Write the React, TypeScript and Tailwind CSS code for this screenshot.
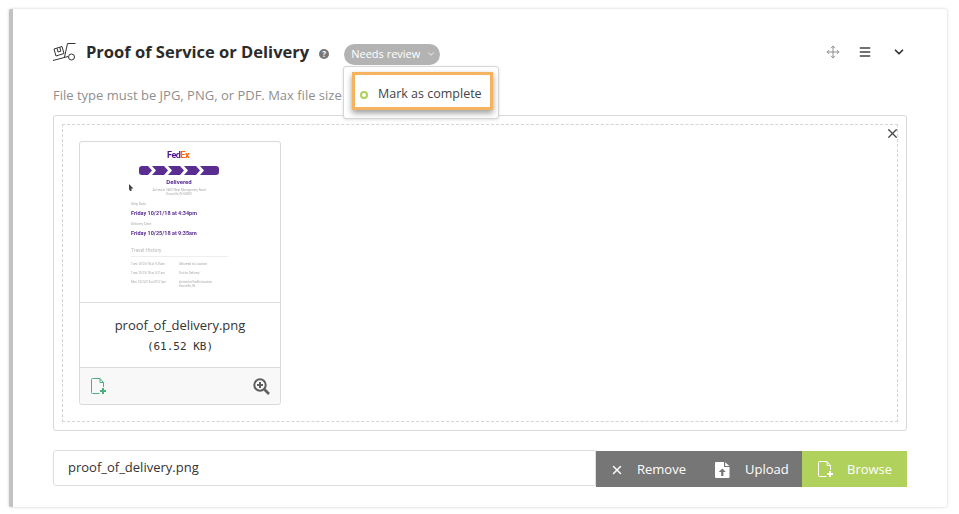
import React from 'react';
import { ChevronDown, Menu, Move, X } from 'lucide-react';

const font = "font-['Open_Sans',sans-serif]";

const DollyIcon = () => (
  <svg width="23" height="20" viewBox="0 0 23 20" fill="none" stroke="#333" strokeWidth="1">
    <path d="M0 18.5 L15 14.5" />
    <path d="M11.5 15 L14.5 1.5 L22.5 1.5" />
    <circle cx="18.5" cy="15" r="3" />
    <path d="M1 7 L9 4.5 L11 11.5 L3 14 Z" />
    <path d="M4 6.2 L5 10 L7.8 9.2 L6.8 5.4" />
  </svg>
);

const FileAddIcon = ({ color }: { color: string }) => (
  <svg width="16" height="17" viewBox="0 0 16 17" fill="none" stroke={color} strokeWidth="1">
    <path d="M8.5 15.5 H1.5 a1 1 0 0 1 -1 -1 V1.5 a1 1 0 0 1 1 -1 H9 L12.5 4.5 V9" />
    <path d="M9 0.5 V4.5 H12.5" />
    <path d="M12 10 V16 M9 13 H15" strokeWidth="2" />
  </svg>
);

const UploadIcon = () => (
  <svg width="15" height="16" viewBox="0 0 15 16">
    <path
      fill="#fff"
      fillRule="evenodd"
      d="M1 0 H9 V5 H14.5 V15 a1 1 0 0 1 -1 1 H1 a1 1 0 0 1 -1 -1 V1 a1 1 0 0 1 1 -1 Z M10.2 0.2 L14.3 4 H10.2 Z M7.3 6.5 L3.8 10 H6.2 V14 H8.4 V10 H10.8 Z"
    />
  </svg>
);

const ZoomIcon = () => (
  <svg width="17" height="17" viewBox="0 0 17 17" fill="none" stroke="#5f5f5f">
    <circle cx="7" cy="7" r="5.7" strokeWidth="2" />
    <path d="M11.5 11.5 L16 16" strokeWidth="2.6" />
    <path d="M7 4 V10 M4 7 H10" strokeWidth="2" />
  </svg>
);

const ProgressArrows = () => (
  <svg width="80" height="9" viewBox="0 0 80 9" fill="#5a2d91">
    <path d="M3 0 H9 L13 4.5 L9 9 H3 Q0 9 0 6 V3 Q0 0 3 0 Z" />
    <path d="M13 0 H25 L29 4.5 L25 9 H13 L17 4.5 Z" />
    <path d="M29 0 H41 L45 4.5 L41 9 H29 L33 4.5 Z" />
    <path d="M45 0 H57 L61 4.5 L57 9 H45 L49 4.5 Z" />
    <path d="M61 0 H77 Q80 0 80 3 V6 Q80 9 77 9 H61 L65 4.5 Z" />
  </svg>
);

// tiny FedEx receipt inside the file thumbnail
const Thumbnail = () => (
  <div className="h-[160px] pt-[8px] pl-[51px] flex flex-col font-['Roboto',sans-serif] blur-[0.5px] relative">
    <div className="w-[80px] ml-[8px] text-center text-[9px] leading-[11px] font-bold tracking-[-0.5px] -translate-x-[1px]">
      <span className="text-[#4d148c]">Fed</span>
      <span className="text-[#ff6200]">Ex</span>
    </div>
    <div className="mt-[5px] ml-[8px] w-[80px] h-[9px]">
      <ProgressArrows />
    </div>
    <div className="mt-[3px] ml-[8px] w-[80px] text-center text-[6px] leading-[8px] font-bold text-[#5a2d91]">Delivered</div>
    <div className="mt-[2px] ml-[8px] w-[80px] text-center text-[3px] leading-[4px] text-[#aaa]">
      Arrived at 3400 West Montgomery Road
      <br />
      Knoxville, IN 68000
    </div>
    <div className="mt-[6px] text-[3.5px] leading-[5px] text-[#aaa]">Ship Date</div>
    <div className="mt-[2px] text-[5.5px] leading-[8px] font-bold text-[#5a2d91]">Friday 10/21/18 at 4:34pm</div>
    <div className="mt-[5px] text-[3.5px] leading-[5px] text-[#aaa]">Delivery Date</div>
    <div className="mt-[2px] text-[5.5px] leading-[8px] font-bold text-[#5a2d91]">Friday 10/25/18 at 9:35am</div>
    <div className="mt-[10px] w-[97px] border-b border-[#eee] pb-[2px] text-[5px] leading-[7px] text-[#bbb]">Travel History</div>
    <div className="mt-[5px] grid grid-cols-[48px_1fr] w-[97px] text-[3px] leading-[4px] text-[#aaa] gap-y-[5px]">
      <span>Tues 10/25/18 at 9:35am</span>
      <span>Delivered to Location</span>
      <span>Tues 10/25/18 at 5:21am</span>
      <span>Out for Delivery</span>
      <span>Mon 10/24/18 at 09:21pm</span>
      <span>
        Arrived at FedEx location
        <br />
        Knoxville, IN
      </span>
    </div>
    <svg className="absolute left-[49px] top-[42px]" width="5" height="7" viewBox="0 0 5 7">
      <path d="M0 0 L4.5 4.5 L2.5 4.5 L2.5 7 L1 7 L0 5 Z" fill="#444" />
    </svg>
  </div>
);

const App: React.FC = () => {
  return (
    <div className={`w-[959px] h-[514px] bg-white overflow-hidden pt-[9px] pl-[9px] ${font}`}>
      {/* Card */}
      <div className="relative w-[938px] h-[498px] bg-white border-l-[4px] border-[#c2c2c2] rounded-[2px] shadow-[0_0_3px_rgba(0,0,0,0.2)] pt-[29px] px-[40px]">
        {/* Header */}
        <div className="flex items-center h-[27px]">
          <div className="w-[23px] h-[20px] mr-[10px]">
            <DollyIcon />
          </div>
          <h2 className="text-[16.5px] leading-[27px] font-bold text-[#2b2b2b]">Proof of Service or Delivery</h2>
          <div className="ml-[10px] mt-[4px] w-[10px] h-[10px] rounded-full bg-[#777] flex items-center justify-center text-white text-[8px] leading-none font-bold">?</div>
          <div className="ml-[15px] mt-[5px] w-[96px] h-[21px] rounded-full bg-[#b3b3b3] flex items-center pl-[7px] text-white text-[11px]">
            <span>Needs review</span>
            <ChevronDown className="ml-[6px] w-[10px] h-[10px]" strokeWidth={2} />
          </div>
          <div className="ml-auto flex items-center text-[#333]">
            <Move className="w-[14px] h-[14px] text-[#888] mr-[18px] ml-[1px]" strokeWidth={1.6} />
            <Menu className="w-[14px] h-[14px] text-[#444]" strokeWidth={2.6} />
            <ChevronDown className="w-[14px] h-[14px] ml-[20px] mr-[1px] text-[#333]" strokeWidth={3} />
          </div>
        </div>

        {/* Status menu */}
        <div className="absolute left-[330px] top-[57px] w-[156px] h-[53px] bg-white border border-[#d6d6d6] rounded-[3px] shadow-[0_1px_3px_rgba(0,0,0,0.12)] z-10 pt-[5px] pl-[8px]">
          <div className="w-[141px] h-[38px] border-[3px] border-[#f5b35f] shadow-[0_3px_6px_rgba(0,0,0,0.4)] flex items-center pl-[5px] pt-[7px] text-[12.5px] text-[#444]">
            <span className="w-[8px] h-[8px] rounded-full border-[2px] border-[#aed15c] mr-[10px]" />
            Mark as complete
          </div>
        </div>

        <p className="mt-[20px] text-[13px] leading-[21px] text-[#8f8f8f]">File type must be JPG, PNG, or PDF. Max file size</p>

        {/* Drop area */}
        <div className="relative mt-[9px] h-[316px] border border-[#d9d9d9] rounded-[3px] p-[8px]">
          <div className="h-[298px] border border-dashed border-[#d4d4d4] pl-[16px] pt-[16px]">
            <div className="w-[202px] h-[264px] border border-[#d9d9d9] rounded-[3px] flex flex-col">
              <Thumbnail />
              <div className="h-[65px] border-t border-[#dcdcdc] flex flex-col items-center pt-[12px] text-[#333]">
                <span className="text-[13px] leading-[20px]">proof_of_delivery.png</span>
                <span className="font-['DejaVu_Sans_Mono',monospace] text-[11px] leading-[20px] mt-[2px]">(61.52 KB)</span>
              </div>
              <div className="flex-1 border-t border-[#dcdcdc] bg-[#f8f8f8] flex items-center justify-between pl-[11px] pr-[10px] rounded-b-[3px]">
                <FileAddIcon color="#4cb07c" />
                <ZoomIcon />
              </div>
            </div>
          </div>
          <X className="absolute right-[6px] top-[10px] w-[15px] h-[15px] text-[#444]" strokeWidth={2} />
        </div>

        {/* File input row */}
        <div className="mt-[19px] flex h-[37px] items-end">
          <div className="flex-1 h-[36px] self-start border border-[#dedede] rounded-l-[3px] flex items-center pl-[14px] text-[13px] text-[#333]">proof_of_delivery.png</div>
          <div className="w-[206px] h-[36px] bg-[#767676] flex items-center pt-[1px] text-white text-[13px] font-medium">
            <X className="w-[14px] h-[14px] ml-[14px]" strokeWidth={2.4} />
            <span className="ml-[13px]">Remove</span>
            <span className="ml-[29px]"><UploadIcon /></span>
            <span className="ml-[15px]">Upload</span>
          </div>
          <div className="w-[105px] h-[36px] bg-[#b0d15b] flex items-center pt-[1px] text-white text-[13px] font-medium pl-[16px]">
            <FileAddIcon color="#fff" />
            <span className="ml-[13px]">Browse</span>
          </div>
        </div>
      </div>
    </div>
  );
};

export default App;
